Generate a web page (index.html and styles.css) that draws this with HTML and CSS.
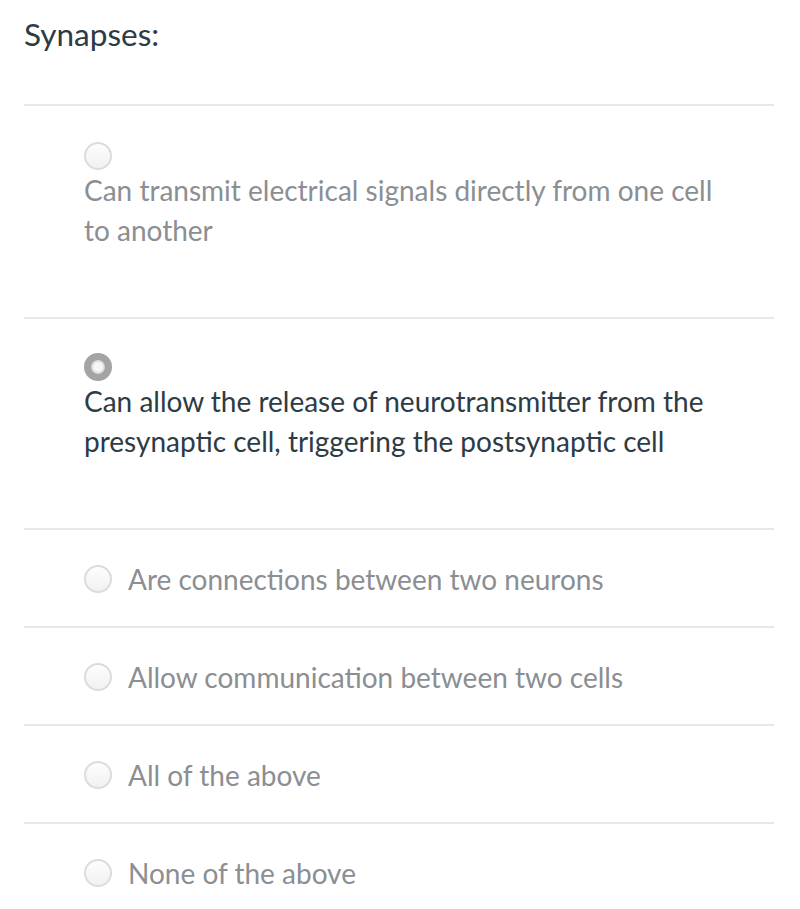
FILE: index.html
```html
<!DOCTYPE html>
<html>
<head>
<meta charset="utf-8">
<link rel="stylesheet" href="styles.css">
</head>
<body>
<div class="page">
  <h1 class="title">Synapses:</h1>
  <ul class="options">
    <li class="opt stacked first">
      <span class="radio"></span>
      <span class="label">Can transmit electrical signals directly from one cell to another</span>
    </li>
    <li class="opt stacked selected">
      <span class="radio"></span>
      <span class="label">Can allow the release of neurotransmitter from the presynaptic cell, triggering the postsynaptic cell</span>
    </li>
    <li class="opt inline">
      <span class="radio"></span>
      <span class="label">Are connections between two neurons</span>
    </li>
    <li class="opt inline">
      <span class="radio"></span>
      <span class="label">Allow communication between two cells</span>
    </li>
    <li class="opt inline">
      <span class="radio"></span>
      <span class="label">All of the above</span>
    </li>
    <li class="opt inline">
      <span class="radio"></span>
      <span class="label">None of the above</span>
    </li>
  </ul>
</div>
</body>
</html>
```
FILE: styles.css
```css
html, body {
  margin: 0;
  padding: 0;
  background: #ffffff;
}
body {
  font-family: Lato, "Open Sans", sans-serif;
}
.page {
  padding: 0 26px 0 24px;
}
.title {
  margin: 0;
  padding-top: 14px;
  height: 104px;
  box-sizing: border-box;
  font-size: 31.5px;
  font-weight: 400;
  line-height: 40px;
  color: #2d3b45;
}
.options {
  list-style: none;
  margin: 0;
  padding: 0;
}
.opt {
  border-top: 2px solid #e8e8e8;
  color: #8b8e92;
  font-size: 28px;
  line-height: 40px;
}
.opt.selected {
  color: #2d3b45;
}
.stacked {
  height: 211px;
  box-sizing: border-box;
  padding: 36px 60px 0 60px;
  display: flex;
  flex-direction: column;
  align-items: flex-start;
}
.stacked.first {
  height: 213px;
}
.stacked .radio {
  margin-bottom: 0;
}
.stacked.selected .radio {
  margin-top: -2px;
}
.inline {
  height: 98px;
  box-sizing: border-box;
  padding: 2px 60px 0 60px;
  display: flex;
  align-items: center;
  gap: 16px;
}
.radio {
  width: 28px;
  height: 28px;
  box-sizing: border-box;
  border-radius: 50%;
  border: 2px solid #dcdcdc;
  background: linear-gradient(#fdfdfd, #f1f1f1);
  flex: none;
}
.selected .radio {
  border: 7px solid #a4a4a4;
  background: radial-gradient(circle, #f6f6f6 0, #f6f6f6 4px, #d2d2d2 7px);
}
```
